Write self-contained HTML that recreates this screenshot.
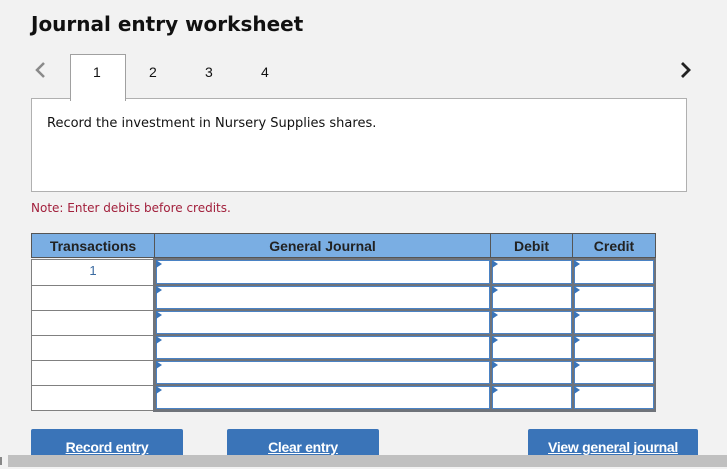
<!DOCTYPE html>
<html><head><style>
body{margin:0;width:727px;height:469px;background:#f2f2f2;position:relative;overflow:hidden;font-family:"DejaVu Sans",Verdana,sans-serif}
.a{position:absolute}
h1{position:absolute;left:31px;top:12px;margin:0;font-size:20px;font-weight:bold;color:#111}
.tab{font-family:"Liberation Sans",Arial,sans-serif;font-size:14px;color:#111}
.hd{position:absolute;top:233px;height:25px;background:#7aaee3;border:1px solid #555;box-sizing:border-box;font-family:"Liberation Sans",Arial,sans-serif;font-weight:bold;font-size:14px;color:#222;text-align:center;line-height:24px}
.tc{position:absolute;left:31px;width:124px;background:#fff;border:1px solid #808080;box-sizing:border-box;text-align:center;font-family:"Liberation Sans",Arial,sans-serif;font-size:13px;color:#3a6aa0;line-height:22px}
.in{position:absolute;background:#6f737a}
.in div{position:absolute;left:2px;top:2px;right:0;bottom:0;background:#fff;border:1px solid #4a82c4}
.in i{position:absolute;left:2px;top:2px;border-left:6px solid #3a74b8;border-top:4px solid transparent;border-bottom:4px solid transparent}
.btn{position:absolute;top:429px;height:26px;background:#3a74b8;border-radius:2px 2px 0 0;color:#fff;font-family:"Liberation Sans",Arial,sans-serif;font-weight:bold;font-size:14px;letter-spacing:-0.3px;text-align:center;line-height:37px;overflow:hidden;text-decoration:underline}
</style></head><body>
<h1>Journal entry worksheet</h1>
<svg class="a" style="left:33px;top:61px" width="14" height="18"><path d="M11 2 L4 9 L11 16" fill="none" stroke="#8a8a8a" stroke-width="2.5"/></svg>
<svg class="a" style="left:679px;top:61px" width="14" height="18"><path d="M3 2 L10 9 L3 16" fill="none" stroke="#222" stroke-width="2.8"/></svg>
<div class="a" style="left:31px;top:98px;width:654px;height:92px;background:#fff;border:1px solid #b0b0b0"></div>
<div class="a" style="left:70px;top:54px;width:54px;height:46px;background:#fff;border:1px solid #a0a0a0;border-bottom:none"></div>
<div class="a tab" style="left:93px;top:64px">1</div>
<div class="a tab" style="left:149px;top:64px">2</div>
<div class="a tab" style="left:205px;top:64px">3</div>
<div class="a tab" style="left:261px;top:64px">4</div>
<div class="a" style="left:47px;top:116px;font-size:13px;color:#111">Record the investment in Nursery Supplies shares.</div>
<div class="a" style="left:31px;top:201px;font-size:12px;color:#a2203c">Note: Enter debits before credits.</div>

<div class="hd" style="left:31px;width:124px">Transactions</div>
<div class="hd" style="left:154px;width:337px">General Journal</div>
<div class="hd" style="left:490px;width:83px">Debit</div>
<div class="hd" style="left:572px;width:84px">Credit</div>

<div class="tc" style="top:259px;height:27px">1</div>
<div class="tc" style="top:285px;height:26px"></div>
<div class="tc" style="top:310px;height:26px"></div>
<div class="tc" style="top:335px;height:26px"></div>
<div class="tc" style="top:360px;height:26px"></div>
<div class="tc" style="top:385px;height:26px"></div>

<div class="a" style="left:153px;top:258px;width:503px;height:154px;background:#6f737a"></div>
<div class="in" style="left:154px;top:258px;width:336px;height:26px"><div></div><i></i></div>
<div class="in" style="left:490px;top:258px;width:82px;height:26px"><div></div><i></i></div>
<div class="in" style="left:572px;top:258px;width:82px;height:26px"><div></div><i></i></div>
<div class="in" style="left:154px;top:284px;width:336px;height:25px"><div></div><i></i></div>
<div class="in" style="left:490px;top:284px;width:82px;height:25px"><div></div><i></i></div>
<div class="in" style="left:572px;top:284px;width:82px;height:25px"><div></div><i></i></div>
<div class="in" style="left:154px;top:309px;width:336px;height:25px"><div></div><i></i></div>
<div class="in" style="left:490px;top:309px;width:82px;height:25px"><div></div><i></i></div>
<div class="in" style="left:572px;top:309px;width:82px;height:25px"><div></div><i></i></div>
<div class="in" style="left:154px;top:334px;width:336px;height:25px"><div></div><i></i></div>
<div class="in" style="left:490px;top:334px;width:82px;height:25px"><div></div><i></i></div>
<div class="in" style="left:572px;top:334px;width:82px;height:25px"><div></div><i></i></div>
<div class="in" style="left:154px;top:359px;width:336px;height:25px"><div></div><i></i></div>
<div class="in" style="left:490px;top:359px;width:82px;height:25px"><div></div><i></i></div>
<div class="in" style="left:572px;top:359px;width:82px;height:25px"><div></div><i></i></div>
<div class="in" style="left:154px;top:384px;width:336px;height:25px"><div></div><i></i></div>
<div class="in" style="left:490px;top:384px;width:82px;height:25px"><div></div><i></i></div>
<div class="in" style="left:572px;top:384px;width:82px;height:25px"><div></div><i></i></div>

<div class="btn" style="left:31px;width:152px">Record entry</div>
<div class="btn" style="left:227px;width:152px">Clear entry</div>
<div class="btn" style="left:528px;width:170px">View general journal</div>
<div class="a" style="left:8px;top:455px;width:719px;height:12px;background:#c0c0c0"></div>
<div class="a" style="left:0;top:457px;width:2px;height:8px;background:#888"></div>
</body></html>
